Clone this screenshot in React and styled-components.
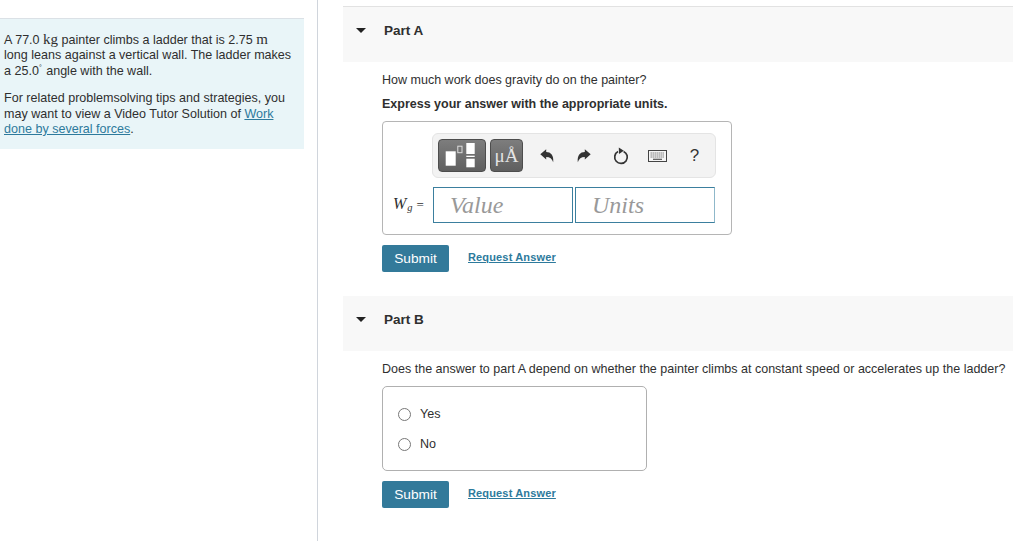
import React from "react";
import styled, { createGlobalStyle } from "styled-components";

const Global = createGlobalStyle`
  html, body { margin: 0; padding: 0; background: #fff; }
  body {
    font-family: "Liberation Sans", Arial, sans-serif;
    color: #2f2f2f;
    overflow: hidden;
  }
`;

const Page = styled.div`
  width: 1024px;
  height: 541px;
  display: flex;
  overflow: hidden;
`;
const LeftColumn = styled.div`
  width: 318px;
  height: 541px;
  flex: none;
  box-sizing: border-box;
  padding: 18px 13px 0 0;
  border-right: 1px solid #d0d5dc;
  margin-right: 25px;
`;
const Intro = styled.div`
  background: #e9f5f8;
  border-top: 1px solid #dbe1e6;
  box-sizing: border-box;
  height: 131px;
  padding: 13px 10px 0 4px;
  font-size: 12.55px;
  line-height: 15.4px;
`;
const Para = styled.p`
  margin: 0 0 12px;
`;
const MathRoman = styled.span`
  font-family: "Liberation Serif", serif;
  font-size: 15px;
  line-height: 1;
`;
const Sup = styled.sup`
  font-size: 7px;
  line-height: 0;
  margin-right: 1px;
`;
const Link = styled.a`
  color: #2d7a9c;
  text-decoration: underline;
`;
const RightColumn = styled.div`
  width: 670px;
  flex: none;
  padding-top: 6px;
`;
const PartHeader = styled.div`
  background: #f8f8f8;
  border-top: ${(p) => (p.$ruled ? "1px solid #e2e2e2" : "none")};
  box-sizing: content-box;
  display: flex;
  align-items: flex-start;
  padding-top: 16px;
  height: 39px;
`;
const Caret = styled.span`
  width: 0;
  height: 0;
  margin: 5px 18px 0 13px;
  border-left: 5px solid transparent;
  border-right: 5px solid transparent;
  border-top: 5px solid #222;
`;
const PartTitle = styled.span`
  font-size: 13.5px;
  font-weight: 700;
  line-height: 16px;
`;
const PartBody = styled.div`
  padding: ${(p) => p.$top}px 0 0 39px;
  height: ${(p) => p.$height}px;
  box-sizing: border-box;
`;
const Prompt = styled.p`
  margin: 0 0 ${(p) => p.$gap}px;
  font-size: ${(p) => (p.$bold ? "12.5px" : "12.53px")};
  line-height: 16px;
  font-weight: ${(p) => (p.$bold ? 700 : 400)};
  white-space: nowrap;
`;
const AnswerBox = styled.div`
  width: 350px;
  height: 114px;
  box-sizing: border-box;
  border: 1px solid #b5b5b5;
  border-radius: 4px;
  padding: 11px 16px 0 10px;
`;
const Toolbar = styled.div`
  width: 284px;
  height: 45px;
  margin-left: 39px;
  box-sizing: border-box;
  background: #f3f3f3;
  border: 1px solid #e4e4e4;
  border-radius: 6px;
  display: flex;
  align-items: center;
  padding-left: 5px;
`;
const ToolButton = styled.div`
  width: ${(p) => p.$w}px;
  height: 33px;
  margin-right: ${(p) => p.$gap}px;
  box-sizing: border-box;
  border: 1px solid #4d4d4d;
  border-radius: 4px;
  background: linear-gradient(#7d7d7d, #5f5f5f);
  display: flex;
  align-items: center;
  justify-content: center;
  color: #e4e4e4;
  font-family: "Liberation Serif", serif;
  font-size: 19px;
`;
const IconSlot = styled.div`
  width: 37px;
  display: flex;
  justify-content: center;
  align-items: center;
  font-size: 17px;
  color: #333;
`;
const InputRow = styled.div`
  display: flex;
  align-items: center;
  margin-top: 9px;
`;
const VarLabel = styled.div`
  width: 40px;
  flex: none;
  font-family: "Liberation Serif", serif;
  font-size: 16px;
  font-style: italic;
  white-space: nowrap;
  box-sizing: border-box;
  margin-bottom: 2px;
`;
const Sub = styled.sub`
  font-size: 10.5px;
  line-height: 0;
  vertical-align: -2px;
  margin-left: 1px;
`;
const Equals = styled.span`
  font-style: normal;
  font-size: 13px;
  margin-left: 4px;
`;
const Field = styled.div`
  width: 140px;
  height: 36px;
  flex: none;
  box-sizing: border-box;
  border: 1px solid #3b7f9e;
  border-right-color: ${(p) => (p.$last ? "#8fb8ca" : "#3b7f9e")};
  margin-right: ${(p) => (p.$last ? 0 : 2)}px;
  padding-left: 16px;
  font-family: "Liberation Serif", serif;
  font-style: italic;
  font-size: 24px;
  line-height: 34px;
  color: #999;
`;
const Actions = styled.div`
  display: flex;
  align-items: center;
  margin-top: ${(p) => p.$top}px;
`;
const Submit = styled.div`
  width: 67px;
  height: 27px;
  background: #337a9a;
  border-radius: 2px;
  color: #fff;
  font-size: 13.7px;
  line-height: 27px;
  text-align: center;
`;
const RequestAnswer = styled.a`
  margin: 0 0 3px 19px;
  color: #2d7a9c;
  font-size: 11px;
  font-weight: 700;
  text-decoration: underline;
  letter-spacing: 0.15px;
`;
const ChoiceBox = styled.div`
  width: 265px;
  height: 85px;
  box-sizing: border-box;
  border: 1px solid #b0b0b0;
  border-radius: 5px;
  padding: 12px 0 0 15px;
`;
const Choice = styled.div`
  height: 30px;
  display: flex;
  align-items: center;
  font-size: 12.55px;
`;
const Radio = styled.span`
  width: 11px;
  height: 11px;
  border: 1px solid #777;
  border-radius: 50%;
  background: #fff;
  margin-right: 9px;
`;

function MathType() {
  return (
    <svg width="46" height="31" viewBox="0 0 46 31">
      <rect x="6.7" y="11.3" width="10" height="14.4" fill="#fff" />
      <rect x="18.8" y="6.2" width="4.2" height="6.5" fill="none" stroke="#ddd" strokeWidth="1" />
      <rect x="27.3" y="3" width="8.4" height="11" fill="#fff" />
      <rect x="27.3" y="15.7" width="8.4" height="1.3" fill="#fff" />
      <rect x="27.3" y="18.7" width="8.4" height="8.6" fill="#fff" />
    </svg>
  );
}

function Undo({ flip }) {
  return (
    <svg width="14" height="14" viewBox="0 0 14 14" style={flip ? { transform: "scaleX(-1)" } : undefined}>
      <path d="M0.3 5.2 L6.2 0.2 V3 C10.8 3 14 6.2 13.2 13.2 C12 9.8 10 8 6.2 8 V10.6 Z" fill="#333" />
    </svg>
  );
}

function Reset() {
  return (
    <svg width="16" height="18" viewBox="0 0 16 18">
      <path d="M5 4.6 A6.3 6.3 0 1 0 10.6 4.4" fill="none" stroke="#333" strokeWidth="1.7" />
      <path d="M5.8 0.5 L10.8 3.8 L6 7 Z" fill="#333" />
    </svg>
  );
}

function Keyboard() {
  return (
    <svg width="19" height="12" viewBox="0 0 19 12">
      <rect x="0.5" y="0.5" width="18" height="11" fill="#f5f5f5" stroke="#444" />
      <path d="M2.5 3 H16.5 M2.5 5 H16.5 M2.5 7 H16.5" stroke="#777" strokeWidth="1" strokeDasharray="1.4 0.6" />
      <path d="M5 9.3 H14" stroke="#555" strokeWidth="1.2" />
    </svg>
  );
}

export default function App() {
  return (
    <Page>
      <Global />
      <LeftColumn>
        <Intro>
          <Para>
            A 77.0 <MathRoman>kg</MathRoman> painter climbs a ladder that is 2.75 <MathRoman>m</MathRoman> long leans
            against a vertical wall. The ladder makes a 25.0<Sup>°</Sup> angle with the wall.
          </Para>
          <Para>
            For related problemsolving tips and strategies, you may want to view a Video Tutor Solution of{" "}
            <Link>Work done by several forces</Link>.
          </Para>
        </Intro>
      </LeftColumn>
      <RightColumn>
        <PartHeader $ruled>
          <Caret />
          <PartTitle>Part A</PartTitle>
        </PartHeader>
        <PartBody $top={10} $height={234}>
          <Prompt $gap={8}>How much work does gravity do on the painter?</Prompt>
          <Prompt $bold $gap={9}>
            Express your answer with the appropriate units.
          </Prompt>
          <AnswerBox>
            <Toolbar>
              <ToolButton $w={48} $gap={4}>
                <MathType />
              </ToolButton>
              <ToolButton $w={33} $gap={5}>
                μÅ
              </ToolButton>
              <IconSlot>
                <Undo />
              </IconSlot>
              <IconSlot>
                <Undo flip />
              </IconSlot>
              <IconSlot>
                <Reset />
              </IconSlot>
              <IconSlot>
                <Keyboard />
              </IconSlot>
              <IconSlot>?</IconSlot>
            </Toolbar>
            <InputRow>
              <VarLabel>
                W<Sub>g</Sub>
                <Equals>=</Equals>
              </VarLabel>
              <Field>Value</Field>
              <Field $last>Units</Field>
            </InputRow>
          </AnswerBox>
          <Actions $top={10}>
            <Submit>Submit</Submit>
            <RequestAnswer>Request Answer</RequestAnswer>
          </Actions>
        </PartBody>
        <PartHeader>
          <Caret />
          <PartTitle>Part B</PartTitle>
        </PartHeader>
        <PartBody $top={10}>
          <Prompt $gap={9}>
            Does the answer to part A depend on whether the painter climbs at constant speed or accelerates up the
            ladder?
          </Prompt>
          <ChoiceBox>
            <Choice>
              <Radio />
              Yes
            </Choice>
            <Choice>
              <Radio />
              No
            </Choice>
          </ChoiceBox>
          <Actions $top={10}>
            <Submit>Submit</Submit>
            <RequestAnswer>Request Answer</RequestAnswer>
          </Actions>
        </PartBody>
      </RightColumn>
    </Page>
  );
}
